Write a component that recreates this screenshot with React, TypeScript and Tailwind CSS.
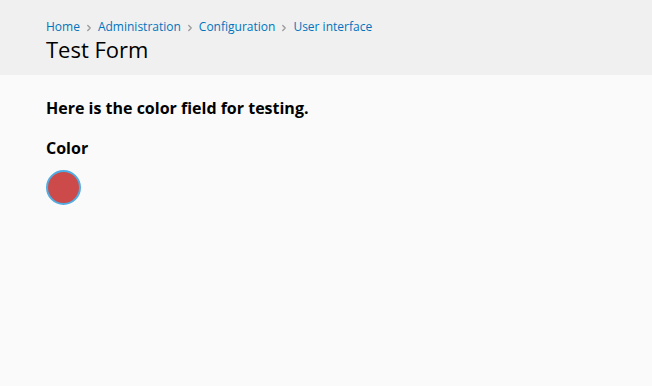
import { ChevronRight } from "lucide-react";

const CRUMBS = ["Home", "Administration", "Configuration", "User interface"];

export default function App() {
  return (
    <div
      className="min-h-[386px] bg-[#fafafa] text-black"
      style={{ fontFamily: '"Open Sans", "Liberation Sans", sans-serif' }}
    >
      <header className="bg-[#f0f0f0] h-[75px] px-[46px] pt-[18px]">
        <nav className="flex items-center text-[12px] leading-[18px]">
          {CRUMBS.map((c, i) => (
            <div key={c} className="flex items-center">
              <a className="text-[#0074bd]" href="#">
                {c}
              </a>
              {i < CRUMBS.length - 1 && (
                <ChevronRight className="w-[10px] h-[10px] mx-[4px] mt-[2px] text-[#999999]" strokeWidth={3} />
              )}
            </div>
          ))}
        </nav>
        <h1 className="text-[22px] leading-[28px] font-normal -mt-[1px]">Test Form</h1>
      </header>
      <main className="px-[46px] pt-[22px]">
        <p className="text-[16px] leading-[22px] font-bold">Here is the color field for testing.</p>
        <label className="block mt-[18px] text-[16px] leading-[22px] font-bold">Color</label>
        <div className="mt-[11px] w-[35px] h-[35px] rounded-full border-2 border-[#4fade3] bg-[#cc4a4a]" />
      </main>
    </div>
  );
}
